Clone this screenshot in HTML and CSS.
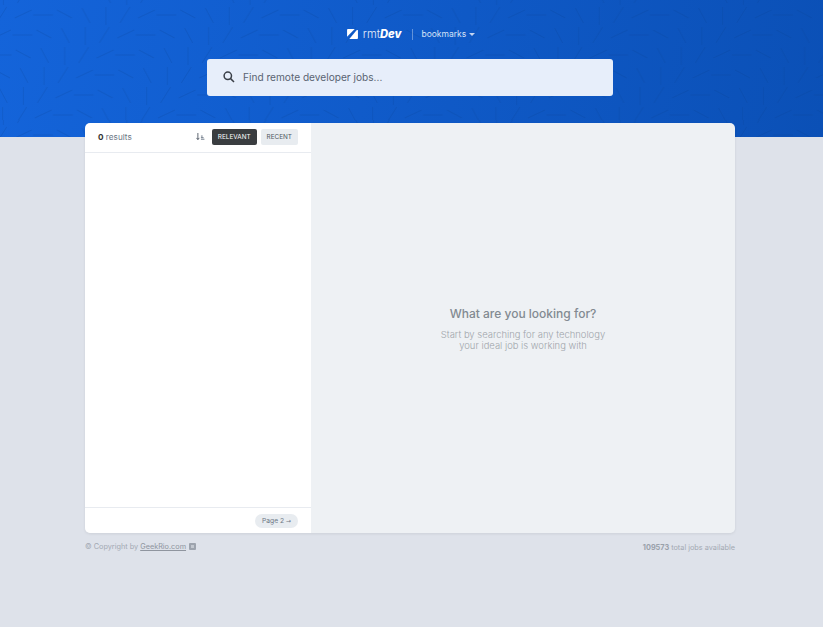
FILE: index.html
```html
<!DOCTYPE html>
<html lang="en">
<head>
<meta charset="utf-8">
<title>rmtDev</title>
<link rel="stylesheet" href="styles.css">
</head>
<body>
<header class="header">
  <svg class="header__pattern" aria-hidden="true" width="100%" height="100%">
    <defs>
      <path id="strokes" class="dash-lines" d="M33 15h20M57 10l15 8M82 8l8 15M106 7v18M120 23l10-16M138 18l17-8"/>
      <g id="row">
        <use href="#strokes" x="-123.330"/>
        <use href="#strokes"/>
        <use href="#strokes" x="123.330"/>
      </g>
      <pattern id="dash" width="123.330" height="120" patternUnits="userSpaceOnUse">
        <use href="#row" x="20.670" y="-20"/>
        <use href="#row"/>
        <use href="#row" x="-20.670" y="20"/>
        <use href="#row" x="-41.330" y="40"/>
        <use href="#row" x="-62" y="60"/>
        <use href="#row" x="-82.670" y="80"/>
        <use href="#row" x="-103.330" y="100"/>
      </pattern>
    </defs>
    <rect width="100%" height="100%" fill="url(#dash)"/>
  </svg>
  <div class="header__top">
    <a class="logo" href="#">
      <svg class="logo__mark" viewBox="0 0 12 11" aria-hidden="true"><path d="M1 0h7.500L0 8.500V1a1 1 0 0 1 1-1z"/><path d="M10.500 1.500L12 1v9a1 1 0 0 1-1 1H2.500z"/></svg>
      <span class="logo__text">rmt<b>Dev</b></span>
    </a>
    <span class="header__divider"></span>
    <button class="bookmarks">bookmarks <span class="bookmarks__caret"></span></button>
  </div>
  <form class="search">
    <svg class="search__icon" viewBox="0 0 12 12" aria-hidden="true"><circle cx="4.800" cy="4.800" r="3.700"/><path d="M7.600 7.600l3.400 3.400"/></svg>
    <span class="search__placeholder">Find remote developer jobs...</span>
  </form>
</header>

<main class="container">
  <section class="sidebar">
    <div class="sidebar__top">
      <p class="count"><b>0</b> results</p>
      <div class="sorting">
        <svg class="sorting__icon" viewBox="0 0 10 8" aria-hidden="true"><path class="sorting__arrow" d="M2 0v7.500M.4 5.600L2 7.500l1.600-1.900"/><path class="sorting__bars" d="M5.500 3.500h2M5.500 5.300h3M5.500 7.100h4"/></svg>
        <button class="sort sort--active">RELEVANT</button>
        <button class="sort">RECENT</button>
      </div>
    </div>
    <div class="sidebar__list"></div>
    <div class="sidebar__bottom">
      <button class="page">Page 2 <span class="page__arrow">→</span></button>
    </div>
  </section>
  <section class="details">
    <h2 class="details__title">What are you looking for?</h2>
    <p class="details__text">Start by searching for any technology<br>your ideal job is working with</p>
  </section>
</main>

<footer class="footer">
  <p class="copyright">© Copyright by <a href="#">GeekRio.com</a> <span class="copyright__box"></span></p>
  <p class="total"><b>109573</b> total jobs available</p>
</footer>
</body>
</html>
```

FILE: styles.css
```css
* { margin: 0; padding: 0; box-sizing: border-box; }

html, body { height: 100%; }

body {
  background: #dee2ea;
  font-family: Inter, "Liberation Sans", sans-serif;
  overflow: hidden;
}

button { font-family: inherit; border: 0; background: none; }

.header {
  position: relative;
  height: 137px;
  padding: 26px 3px 0 0;
  background: linear-gradient(100deg, #1464da 0%, #0b50b6 100%);
  display: flex;
  flex-direction: column;
  align-items: center;
}

.header__pattern { position: absolute; inset: 0; }

.dash-lines { fill: none; stroke: #053a8e; stroke-width: 1; opacity: .2; }

.header__top {
  position: relative;
  display: flex;
  align-items: center;
  height: 16px;
  margin-left: 2px;
}

.logo {
  display: flex;
  align-items: center;
  gap: 5px;
  color: #fff;
  text-decoration: none;
}

.logo__mark { width: 11px; height: 10px; fill: #fff; }

.logo__text { font-size: 11.200px; font-weight: 300; color: #e6edfa; }
.logo__text b { font-weight: 800; font-style: italic; color: #fff; }

.header__divider {
  width: 1px;
  height: 11px;
  margin: 0 8px 0 11px;
  background: rgba(255, 255, 255, .35);
}

.bookmarks {
  display: flex;
  align-items: center;
  gap: 3px;
  font-size: 8.500px;
  font-weight: 400;
  color: #d5e2f7;
}

.bookmarks__caret {
  width: 0;
  height: 0;
  border: 3px solid transparent;
  border-top: 3px solid #c3d4f0;
  border-bottom: 0;
}

.search {
  position: relative;
  margin-top: 17px;
  width: 406px;
  height: 37px;
  padding: 0 0 2px 16px;
  display: flex;
  align-items: center;
  gap: 8px;
  background: #e7eefa;
  border-radius: 3px;
}

.search__icon {
  width: 12px;
  height: 12px;
  fill: none;
  stroke: #3a3f47;
  stroke-width: 1.500;
}

.search__placeholder { font-size: 10.150px; font-weight: 400; color: #5a6472; }

.container {
  position: relative;
  width: 650px;
  height: 410px;
  margin: -14px 0 0 85px;
  display: flex;
  border-radius: 5px;
  overflow: hidden;
  box-shadow: 0 1px 3px rgba(0, 0, 0, .08);
}

.sidebar {
  width: 226px;
  background: #fff;
  display: flex;
  flex-direction: column;
}

.sidebar__top {
  height: 30px;
  padding: 0 13px 2px;
  display: flex;
  align-items: center;
  justify-content: space-between;
  border-bottom: 1px solid #e8ebf0;
}

.count { font-size: 8.200px; color: #6b7684; }
.count b { color: #333; font-weight: 700; }

.sorting { display: flex; align-items: center; }

.sorting__icon { width: 9px; height: 7px; margin-right: 7px; fill: none; stroke-width: 1; }
.sorting__arrow { stroke: #4a5260; }
.sorting__bars { stroke: #5f6b7b; }

.sort {
  height: 16px;
  padding: 0 6px;
  margin-left: 4px;
  font-size: 6.400px;
  font-weight: 400;
  color: #4e5862;
  background: #e8ecf0;
  border-radius: 2px;
}

.sort--active {
  margin-left: 0;
  color: #fff;
  background: #3a3d40;
}

.sidebar__list { flex: 1; }

.sidebar__bottom {
  height: 26px;
  padding: 0 13px;
  display: flex;
  align-items: center;
  justify-content: flex-end;
  border-top: 1px solid #e8ebf0;
}

.page {
  height: 14px;
  padding: 0 7px;
  font-size: 6.700px;
  color: #6d7785;
  background: #e8ecf0;
  border-radius: 7px;
}

.page__arrow { font-family: "DejaVu Sans", sans-serif; font-size: 6px; }

.details {
  flex: 1;
  padding-top: 1px;
  background: #eef1f4;
  display: flex;
  flex-direction: column;
  align-items: center;
  justify-content: center;
  text-align: center;
}

.details__title {
  font-size: 12px;
  font-weight: 500;
  line-height: 15px;
  color: #828a91;
}

.details__text {
  margin-top: 9px;
  font-size: 9.450px;
  line-height: 10.500px;
  font-weight: 300;
  color: #a0a5ab;
}

.footer {
  width: 650px;
  margin: 9px 0 0 85px;
  display: flex;
  justify-content: space-between;
  font-size: 7.300px;
  color: #a3a9b3;
}

.copyright a { color: #8f959f; }

.copyright__box {
  display: inline-block;
  width: 7px;
  height: 7px;
  margin-left: 1px;
  border: 2px solid #9da3ad;
  background: #c2c7cf;
  border-radius: 1px;
  vertical-align: -1px;
}

.total { padding-top: 1px; }
.total b { font-weight: 700; color: #9aa1ab; }
```
